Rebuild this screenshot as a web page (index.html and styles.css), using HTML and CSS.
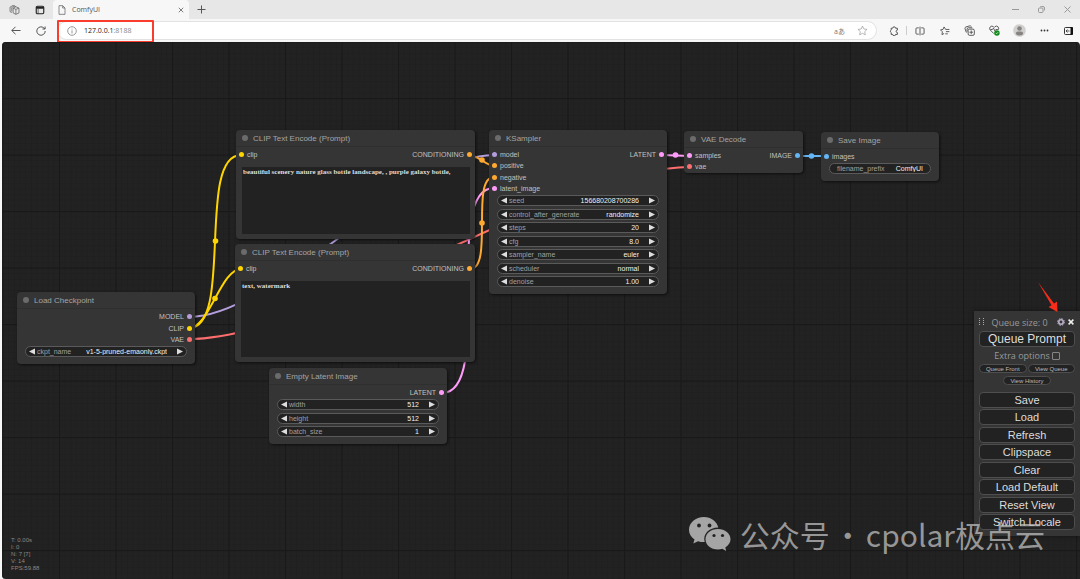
FILE: index.html
```
<!DOCTYPE html>
<html lang="en">
<head>
  <meta charset="UTF-8" />
  <meta name="viewport" content="width=device-width, initial-scale=1.0" />
  <title>ComfyUI</title>
  <link rel="stylesheet" href="styles.css">
</head>
<body>
  <svg width="0" height="0" class="defs" aria-hidden="true">
    <symbol id="prev" viewBox="0 0 6 7"><path d="M6 0.5v6L0 3.5z" fill="#ddd"/></symbol>
    <symbol id="next" viewBox="0 0 6 7"><path d="M0 0.5v6L6 3.5z" fill="#ddd"/></symbol>
  </svg>

  <header class="tabbar">
    <button class="tool" aria-label="Workspaces"><svg width="11" height="11" viewBox="0 0 16 16"><path d="M6 6v7l4 2 4.500-2V6L10 4zM6 6l4 1.800L14.500 6M10 7.800V15M4 12.500 1.500 11V4.500L6 2l2.500 1M4 11V5l4-2 2 .8"/></svg></button>
    <button class="tool" aria-label="Tab actions"><svg width="10" height="10" viewBox="0 0 16 16"><rect x="2" y="2" width="12" height="12" rx="2" stroke="#222" stroke-width="1.800"/><path d="M2 4.500h12" stroke="#222" stroke-width="3"/><path d="M5 6v8" stroke="#222"/></svg></button>
    <div class="tab">
      <svg width="8" height="10" viewBox="0 0 12 15"><path d="M1.500 1h5.500l3.500 3.500V14h-9zM7 1v3.500h3.500"/></svg>
      <span>ComfyUI</span>
      <button class="close" aria-label="Close tab"><svg width="6" height="6" viewBox="0 0 8 8"><path d="M1 1l6 6M7 1l-6 6"/></svg></button>
    </div>
    <button class="tool" aria-label="New tab"><svg width="9" height="9" viewBox="0 0 9 9"><path d="M4.500 0.500v8M0.500 4.500h8"/></svg></button>
    <div class="window-buttons">
      <button aria-label="Minimize"><svg width="7" height="7" viewBox="0 0 7 7"><path d="M0 3.500h7"/></svg></button>
      <button aria-label="Restore"><svg width="7" height="7" viewBox="0 0 7 7"><rect x="0.500" y="2" width="4.500" height="4.500" rx="1"/><path d="M2 1.200Q2.500.5 3.500.5H5Q6.500.5 6.500 2v1.500q0 1-.7 1.300"/></svg></button>
      <button aria-label="Close"><svg width="7" height="7" viewBox="0 0 7 7"><path d="M.5.5l6 6M6.500.5l-6 6"/></svg></button>
    </div>
  </header>

  <nav class="toolbar">
    <button class="tool" aria-label="Back"><svg width="10" height="9" viewBox="0 0 10 9"><path d="M9.500 4.500H.8M4.500.8.8 4.500l3.700 3.700"/></svg></button>
    <button class="tool" aria-label="Reload"><svg width="10" height="10" viewBox="0 0 10 10"><path d="M9.200 5A4.200 4.200 0 1 1 7.800 1.900L9 3M9.100.5V3H6.500"/></svg></button>
    <div class="address">
      <svg class="faint" width="10" height="10" viewBox="0 0 10 10"><circle cx="5" cy="5" r="4.300"/><path d="M5 4.300V7.500M5 2.500v.9"/></svg>
      <a class="url" href="#">127.0.0.1<span>:8188</span></a>
      <button class="reader" aria-label="Read aloud">aあ</button>
      <button class="tool" aria-label="Favorite"><svg class="faint" width="11" height="11" viewBox="0 0 16 16"><path d="M8 1.500l2 4.300 4.600.6-3.400 3.200.9 4.700L8 12l-4.100 2.300.9-4.700L1.400 6.400 6 5.800z"/></svg></button>
      <div class="highlight"></div>
    </div>
    <button class="tool" aria-label="Extensions"><svg width="10" height="10" viewBox="0 0 16 16"><path d="M3.500 3.500H6a2.200 2.200 0 0 1 4.400 0h3V6.500a2 2 0 1 0 0 4V13.500h-3a2.200 2.200 0 0 1-4.400 0H3.500V10.500a2.200 2.200 0 0 1 0-4z" stroke-width="1.600"/></svg></button>
    <span class="divider"></span>
    <button class="tool" aria-label="Split screen"><svg width="10" height="10" viewBox="0 0 16 16"><path d="M6 3H3Q1.500 3 1.500 4.500v7Q1.500 13 3 13h3M10 3H13q1.500 0 1.500 1.500v7Q14.500 13 13 13H10M8 1v14" stroke-width="1.500"/></svg></button>
    <button class="tool" aria-label="Favorites"><svg width="10" height="10" viewBox="0 0 16 16"><path d="M9 5.500 6.500 1.500 4.800 5.500.8 6.200l3 3-.7 4.600L6.500 12M9 5.500h6M9.500 9H15M8.500 12.500h4" stroke-width="1.500"/></svg></button>
    <button class="tool" aria-label="Collections"><svg width="11" height="11" viewBox="0 0 16 16"><rect x="6" y="6" width="9" height="9" rx="2" stroke-width="1.400"/><path d="M10.500 8v5M8 10.500h5M3.500 11 1.500 5.500Q1 3.500 2.500 3l6-1.800q1.500-.3 2 1M4.500 9.500V6q0-2 2-2H12" stroke-width="1.400"/></svg></button>
    <button class="tool" aria-label="Browser essentials"><svg width="11" height="11" viewBox="0 0 16 16"><path d="M7 12.500 1.500 7Q0 4.500 2 2.500t4.500 0L7.500 3.500l1-1q2.500-2 4.500 0t.5 4.500M2 6.500h3l1.500-2 2 4 1.500-2h3" stroke-width="1.400"/><circle cx="11.500" cy="11.500" r="4" fill="#128a1c" stroke="none"/><path d="M9.800 11.500l1.300 1.300 2.200-2.400" stroke="#fff"/></svg></button>
    <button class="tool" aria-label="Profile"><svg width="13" height="13" viewBox="0 0 13 13"><g stroke="none"><circle cx="6.500" cy="6.500" r="6.300" fill="#d2d0ce"/><circle cx="6.500" cy="4.500" r="2.300" fill="#868482"/><path d="M2.800 10Q2.800 7.600 5 7.600h3q2.200 0 2.200 2.400Q8.700 11.500 6.500 11.500T2.800 10z" fill="#868482"/></g></svg></button>
    <button class="tool" aria-label="Settings and more"><svg width="9" height="3" viewBox="0 0 9 3"><g fill="#333" stroke="none"><circle cx="1.500" cy="1.500" r="0.900"/><circle cx="4.500" cy="1.500" r="0.900"/><circle cx="7.500" cy="1.500" r="0.900"/></g></svg></button>
    <button class="tool last" aria-label="Sidebar"><svg width="9" height="8" viewBox="0 0 9 8"><rect x="0.500" y="0.500" width="8" height="7" rx="1" stroke="#333"/><path d="M6.500 0H8q1 0 1 1v6q0 1-1 1H6.500z" fill="#111" stroke="none"/><path d="M5.500 4H2M3.500 2.500 2 4l1.500 1.500" stroke="#333" stroke-width="0.800"/></svg></button>
  </nav>

  <main class="board">
    <svg class="layer" width="100%" height="100%" aria-hidden="true">
      <defs>
        <pattern id="cells" width="10" height="10" patternUnits="userSpaceOnUse" patternTransform="translate(57 56) scale(.565)">
          <path d="M0 0H10M0 0V10" stroke="#1e1e1e" stroke-width="2" fill="none"/>
        </pattern>
        <pattern id="blocks" width="100" height="100" patternUnits="userSpaceOnUse" patternTransform="translate(57 56) scale(.565)">
          <path d="M0 1H100M1 0V100" stroke="#191919" stroke-width="2" fill="none"/>
        </pattern>
      </defs>
      <rect width="100%" height="100%" fill="url(#cells)"/>
      <rect width="100%" height="100%" fill="url(#blocks)"/>
      <g transform="translate(-2 -42)" fill="none" stroke-width="2">
        <path stroke="#b39ddb" d="M189 317C275 317 408 155 494 155"/>
        <path stroke="#ff6e6e" d="M189 339C321 339 558 167 690 167"/>
        <path stroke="#ffd500" d="M189 328C234 328 196 155 241 155"/>
        <path stroke="#ffd500" d="M189 328C209 328 221 269 241 269"/>
        <path stroke="#ff9cf9" d="M442 393C495 393 441 188 494 188"/>
        <path stroke="#ffa931" d="M470 155C477 155 487 166 494 166"/>
        <path stroke="#ffa931" d="M470 269C494 269 470 177 494 177"/>
        <path stroke="#ff9cf9" d="M662 155L690 156"/>
        <path stroke="#64b5f6" d="M798 156H826"/>
        <g stroke="none">
          <circle cx="215.500" cy="241" r="2.800" fill="#ffd500"/>
          <circle cx="215" cy="298.500" r="2.800" fill="#ffd500"/>
          <circle cx="482" cy="160" r="2.800" fill="#ffa931"/>
          <circle cx="482" cy="223" r="2.800" fill="#ffa931"/>
          <circle cx="675.500" cy="155" r="2.800" fill="#ff9cf9"/>
          <circle cx="811.500" cy="156" r="2.800" fill="#64b5f6"/>
        </g>
      </g>
    </svg>

    <section class="node checkpoint">
      <h2>Load Checkpoint</h2>
      <div class="slots three">
        <ul></ul>
        <ul class="out"><li class="model">MODEL</li><li class="clip">CLIP</li><li class="vae">VAE</li></ul>
      </div>
      <div class="widgets">
        <div class="widget"><button aria-label="Previous"><svg><use href="#prev"/></svg></button><label for="ckpt">ckpt_name</label><select id="ckpt"><option>v1-5-pruned-emaonly.ckpt</option></select><button aria-label="Next"><svg><use href="#next"/></svg></button></div>
      </div>
    </section>

    <section class="node positive">
      <h2>CLIP Text Encode (Prompt)</h2>
      <div class="slots">
        <ul><li class="clip">clip</li></ul>
        <ul class="out"><li class="cond">CONDITIONING</li></ul>
      </div>
      <textarea aria-label="Positive prompt" spellcheck="false">beautiful scenery nature glass bottle landscape, , purple galaxy bottle,</textarea>
    </section>

    <section class="node negative">
      <h2>CLIP Text Encode (Prompt)</h2>
      <div class="slots">
        <ul><li class="clip">clip</li></ul>
        <ul class="out"><li class="cond">CONDITIONING</li></ul>
      </div>
      <textarea class="tall" aria-label="Negative prompt" spellcheck="false">text, watermark</textarea>
    </section>

    <section class="node latent">
      <h2>Empty Latent Image</h2>
      <div class="slots">
        <ul></ul>
        <ul class="out"><li class="lat">LATENT</li></ul>
      </div>
      <div class="widgets size">
        <div class="widget"><button aria-label="Less"><svg><use href="#prev"/></svg></button><label for="width">width</label><input id="width" value="512"><button aria-label="More"><svg><use href="#next"/></svg></button></div>
        <div class="widget"><button aria-label="Less"><svg><use href="#prev"/></svg></button><label for="height">height</label><input id="height" value="512"><button aria-label="More"><svg><use href="#next"/></svg></button></div>
        <div class="widget"><button aria-label="Less"><svg><use href="#prev"/></svg></button><label for="batch">batch_size</label><input id="batch" value="1"><button aria-label="More"><svg><use href="#next"/></svg></button></div>
      </div>
    </section>

    <section class="node sampler">
      <h2>KSampler</h2>
      <div class="slots four">
        <ul><li class="model">model</li><li class="cond">positive</li><li class="cond">negative</li><li class="lat">latent_image</li></ul>
        <ul class="out"><li class="lat">LATENT</li></ul>
      </div>
      <div class="widgets sampling">
        <div class="widget"><button aria-label="Less"><svg><use href="#prev"/></svg></button><label for="seed">seed</label><input id="seed" value="156680208700286"><button aria-label="More"><svg><use href="#next"/></svg></button></div>
        <div class="widget"><button aria-label="Previous"><svg><use href="#prev"/></svg></button><label for="control">control_after_generate</label><select id="control"><option>randomize</option></select><button aria-label="Next"><svg><use href="#next"/></svg></button></div>
        <div class="widget"><button aria-label="Less"><svg><use href="#prev"/></svg></button><label for="steps">steps</label><input id="steps" value="20"><button aria-label="More"><svg><use href="#next"/></svg></button></div>
        <div class="widget"><button aria-label="Less"><svg><use href="#prev"/></svg></button><label for="cfg">cfg</label><input id="cfg" value="8.0"><button aria-label="More"><svg><use href="#next"/></svg></button></div>
        <div class="widget"><button aria-label="Previous"><svg><use href="#prev"/></svg></button><label for="sampler">sampler_name</label><select id="sampler"><option>euler</option></select><button aria-label="Next"><svg><use href="#next"/></svg></button></div>
        <div class="widget"><button aria-label="Previous"><svg><use href="#prev"/></svg></button><label for="scheduler">scheduler</label><select id="scheduler"><option>normal</option></select><button aria-label="Next"><svg><use href="#next"/></svg></button></div>
        <div class="widget"><button aria-label="Less"><svg><use href="#prev"/></svg></button><label for="denoise">denoise</label><input id="denoise" value="1.00"><button aria-label="More"><svg><use href="#next"/></svg></button></div>
      </div>
    </section>

    <section class="node decode">
      <h2>VAE Decode</h2>
      <div class="slots two">
        <ul><li class="lat">samples</li><li class="vae">vae</li></ul>
        <ul class="out"><li class="img">IMAGE</li></ul>
      </div>
    </section>

    <section class="node save">
      <h2>Save Image</h2>
      <div class="slots">
        <ul><li class="img">images</li></ul>
      </div>
      <div class="widgets">
        <div class="widget text"><label for="prefix">filename_prefix</label><input id="prefix" value="ComfyUI"></div>
      </div>
    </section>

    <div class="stats">T: 0.00s<br>I: 0<br>N: 7 [7]<br>V: 14<br>FPS:59.88</div>

    <aside class="menu">
      <div class="menu-head">
        <svg width="6" height="8" viewBox="0 0 6 8" fill="#aaa"><path d="M0 0h1v1H0zM4 0h1v1H4zM0 2h1v1H0zM4 2h1v1H4zM0 4h1v1H0zM4 4h1v1H4zM0 6h1v1H0zM4 6h1v1H4z"/></svg>
        <span>Queue size: 0</span>
        <button class="icon" aria-label="Settings"><svg width="8" height="8" viewBox="0 0 8 8" fill="none"><circle cx="4" cy="4" r="2.200" stroke="#b9afc8" stroke-width="1.600"/><circle cx="4" cy="4" r="3.400" stroke="#b9afc8" stroke-width="1" stroke-dasharray="1.500 1.170"/></svg></button>
        <button class="icon" aria-label="Close menu"><svg width="6" height="6" viewBox="0 0 6 6"><path d="M.6.6l4.800 4.800M5.400.6.6 5.400" stroke="#eee" stroke-width="1.500"/></svg></button>
      </div>
      <button class="item">Queue Prompt</button>
      <label class="extra">Extra options<input type="checkbox"></label>
      <div class="small">
        <button>Queue Front</button><button>View Queue</button>
      </div>
      <div class="small history"><button>View History</button></div>
      <div class="items">
        <button class="item">Save</button>
        <button class="item">Load</button>
        <button class="item">Refresh</button>
        <button class="item">Clipspace</button>
        <button class="item">Clear</button>
        <button class="item">Load Default</button>
        <button class="item">Reset View</button>
        <button class="item">Switch Locale</button>
      </div>
      <svg class="arrow" width="22" height="32" viewBox="0 0 22 32"><path d="M1 1 17 22.500 20 20.500 20.500 31 11.500 26 14.500 24.200z" fill="#f72d1c"/></svg>
    </aside>

    <div class="watermark">
      <svg width="42" height="34" viewBox="0 0 42 34">
        <path fill="#a5a5a5" d="M15 0C6.500 0 0 5.700 0 12.800c0 4 2.100 7.400 5.500 9.700L4.300 26.600 9 24.200c2 .6 4.200 1 6.700.9C13.500 17 20 10.800 29.300 10.600 27.800 4.400 22 0 15 0z"/>
        <path fill="#a5a5a5" d="M29 12C21.600 12 16.500 16.700 16.500 22.200S21.800 32.400 29 32.400c1.500 0 3-.2 4.300-.6L37.200 34 36.300 30.400C39.500 28.400 41.500 25.600 41.500 22.200 41.500 16.700 36 12 29 12z"/>
        <g fill="#222"><circle cx="10" cy="8.500" r="1.900"/><circle cx="20.500" cy="8.500" r="1.900"/><circle cx="25" cy="18.500" r="1.600"/><circle cx="33.500" cy="18.500" r="1.600"/></g>
      </svg>
      <span>公众号</span><span>·</span><span>cpolar极点云</span>
    </div>
  </main>
</body>
</html>
```
FILE: styles.css
```
* {
  box-sizing: border-box;
}
body {
  margin: 0;
  height: 100vh;
  display: flex;
  flex-direction: column;
  background: #f7f7f7;
  font-family: 'Liberation Sans', Arial, sans-serif;
  overflow: hidden;
}
button, input, select, textarea {
  font-family: inherit;
  margin: 0;
  padding: 0;
  border: none;
  background: none;
  outline: none;
}
button {
  display: flex;
  align-items: center;
  justify-content: center;
  cursor: pointer;
}
.defs {
  position: absolute;
}

/* browser chrome */
.tabbar, .toolbar {
  display: flex;
  align-items: center;
  flex: none;
  font-family: 'Open Sans', sans-serif;
  font-size: 7px;
}
.tabbar svg, .toolbar svg {
  fill: none;
  stroke: #555;
  flex: none;
}
.tabbar {
  height: 19px;
  padding-left: 2px;
  background: #e7e7e7;
}
.tool {
  width: 25px;
  height: 19px;
  flex: none;
}
.tab {
  display: flex;
  align-items: center;
  gap: 6px;
  width: 136px;
  height: 19px;
  margin-left: 1px;
  padding: 0 5px;
  border-radius: 4px 4px 0 0;
  background: #f7f7f7;
  color: #555;
}
.close {
  margin-left: auto;
}
.window-buttons {
  display: flex;
  margin-left: auto;
}
.window-buttons button {
  width: 26px;
  height: 19px;
}
.tabbar .window-buttons svg {
  stroke: #999;
}
.toolbar {
  height: 23px;
  padding-left: 3px;
}
.address {
  position: relative;
  flex: 1;
  display: flex;
  align-items: center;
  height: 19px;
  margin: 0 4px;
  padding: 0 1px 0 9px;
  border: 1px solid #e2e2e2;
  border-radius: 10px;
  background: #fff;
}
.toolbar .faint {
  stroke: #999;
}
.url {
  flex: 1;
  margin-left: 7px;
  color: #222;
  text-decoration: none;
}
.url span {
  color: #888;
}
.reader {
  font-family: 'Open Sans', 'Noto Sans CJK JP', sans-serif;
  font-size: 7px;
  color: #777;
  margin-right: 5px;
}
.highlight {
  position: absolute;
  top: -2px;
  left: -1px;
  width: 97px;
  height: 23px;
  border: 2px solid #fa3c2d;
  border-radius: 1px;
}
.divider {
  width: 1px;
  height: 9px;
  background: #ccc;
}
.last {
  width: 23px;
}

/* graph */
.board {
  position: relative;
  flex: 1;
  margin-left: 2px;
  border-radius: 4px 4px 0 4px;
  background: #222;
  overflow: hidden;
}
.layer {
  position: absolute;
  inset: 0;
}
.node {
  position: absolute;
  width: 178px;
  border-radius: 4px;
  background: #353535;
  box-shadow: 1px 1px 3px rgba(0, 0, 0, 0.6);
}
.node.checkpoint { left: 15px; top: 250px; }
.node.positive { left: 234px; top: 88px; width: 239px; }
.node.negative { left: 233px; top: 202px; width: 240px; }
.node.latent { left: 267px; top: 326px; }
.node.sampler { left: 487px; top: 88px; }
.node.decode { left: 682px; top: 89px; width: 119px; padding-bottom: 1px; }
.node.save { left: 819px; top: 90px; width: 118px; }

.node h2 {
  display: flex;
  align-items: center;
  gap: 5px;
  height: 17px;
  margin: 0;
  padding-left: 6px;
  border-bottom: 1px solid #2f2f2f;
  font-size: 8px;
  font-weight: normal;
  color: #a4a4a4;
}
.node h2::before {
  content: "";
  width: 6px;
  height: 6px;
  border-radius: 50%;
  background: #6b6b6b;
}
.slots {
  display: flex;
  justify-content: space-between;
  height: 11px;
  margin-top: 2px;
  padding: 0 3px;
}
.slots.two { height: 22px; }
.slots.three { height: 34px; }
.slots.four { height: 45px; }
.slots ul {
  display: flex;
  flex-direction: column;
  justify-content: space-between;
  list-style: none;
  margin: 0;
  padding: 0;
}
.slots li {
  display: flex;
  align-items: center;
  gap: 3px;
  height: 11px;
  font-size: 7px;
  color: #c0c0c0;
}
.slots .out li {
  flex-direction: row-reverse;
}
.slots li::before {
  content: "";
  width: 5px;
  height: 5px;
  border-radius: 50%;
}
.slots .model::before { background: #b39ddb; }
.slots .clip::before { background: #ffd500; }
.slots .vae::before { background: #ff6e6e; }
.slots .cond::before { background: #ffa931; }
.slots .lat::before { background: #ff9cf9; }
.slots .img::before { background: #64b5f6; }

.node textarea {
  display: block;
  width: calc(100% - 11px);
  height: 67px;
  margin: 7px 5px 0 6px;
  padding: 1px;
  resize: none;
  background: #222;
  color: #ddd;
  font-family: 'Liberation Serif', serif;
  font-size: 7px;
  font-weight: bold;
  line-height: 8px;
}
.node textarea.tall {
  height: 76px;
}
.positive, .negative {
  padding-bottom: 5px;
}
.widgets {
  display: flex;
  flex-direction: column;
  justify-content: space-between;
  margin-top: 1px;
  padding: 0 8px;
  margin-bottom: 7px;
}
.widgets.size { height: 38px; }
.widgets.sampling { height: 92px; }
.widget {
  display: flex;
  align-items: center;
  height: 11px;
  padding: 0 3px;
  border: 1px solid #5a5a5a;
  border-radius: 6px;
  background: #222;
  font-size: 7px;
}
.widget svg {
  display: block;
  width: 6px;
  height: 7px;
}
.widget label {
  margin-left: 2px;
  color: #a0a0a0;
}
.widget input, .widget select {
  flex: 1;
  min-width: 0;
  width: 0;
  height: 9px;
  margin-right: 10px;
  appearance: none;
  color: #f0f0f0;
  font-size: 7px;
  text-align: right;
  text-align-last: right;
}
.widget.text {
  padding: 0 7px;
}
.widget.text label {
  margin-left: 0;
}
.widget.text input {
  margin-right: 0;
}
.stats {
  position: absolute;
  left: 9px;
  bottom: 7px;
  font-size: 6px;
  line-height: 7px;
  color: #888;
}

/* side menu */
.menu {
  position: absolute;
  right: 0;
  top: 269px;
  width: 106px;
  padding: 5px 5px 6px;
  background: #353535;
  box-shadow: 0 0 4px rgba(0, 0, 0, 0.5);
  color: #999;
  font-family: 'Open Sans', sans-serif;
  font-size: 9px;
}
.menu-head {
  display: flex;
  align-items: center;
  height: 12px;
  margin-bottom: 3px;
  padding-right: 1px;
}
.menu-head span {
  flex: 1;
  text-align: center;
}
.icon {
  margin-left: 3px;
}
.item {
  width: 100%;
  height: 16px;
  border: 1px solid #4e4e4e;
  border-radius: 4px;
  background: #222;
  color: #ddd;
  font-family: 'Liberation Sans', Arial, sans-serif;
  font-size: 11px;
}
.menu > .item {
  font-size: 12px;
}
.extra {
  display: flex;
  align-items: center;
  justify-content: center;
  gap: 2px;
  height: 17px;
}
.extra input {
  appearance: none;
  width: 8px;
  height: 8px;
  border: 1px solid #858585;
  border-radius: 1px;
}
.small {
  display: flex;
  gap: 1px;
}
.small button {
  flex: 1;
  height: 9px;
  border: 1px solid #4e4e4e;
  border-radius: 5px;
  background: #222;
  color: #bbb;
  font-family: 'Liberation Sans', Arial, sans-serif;
  font-size: 6px;
}
.history {
  margin: 3px 24px 7px;
}
.items {
  display: flex;
  flex-direction: column;
  justify-content: space-between;
  height: 138px;
}
.arrow {
  position: absolute;
  top: -30px;
  right: 21px;
}
.watermark {
  position: absolute;
  right: 35px;
  bottom: 22px;
  display: flex;
  align-items: center;
  gap: 3px;
  color: rgba(190, 190, 190, 0.75);
  font-family: 'Noto Sans CJK SC', sans-serif;
  font-size: 30px;
  line-height: 46px;
  pointer-events: none;
}
.watermark svg {
  margin-right: 6px;
}
```
